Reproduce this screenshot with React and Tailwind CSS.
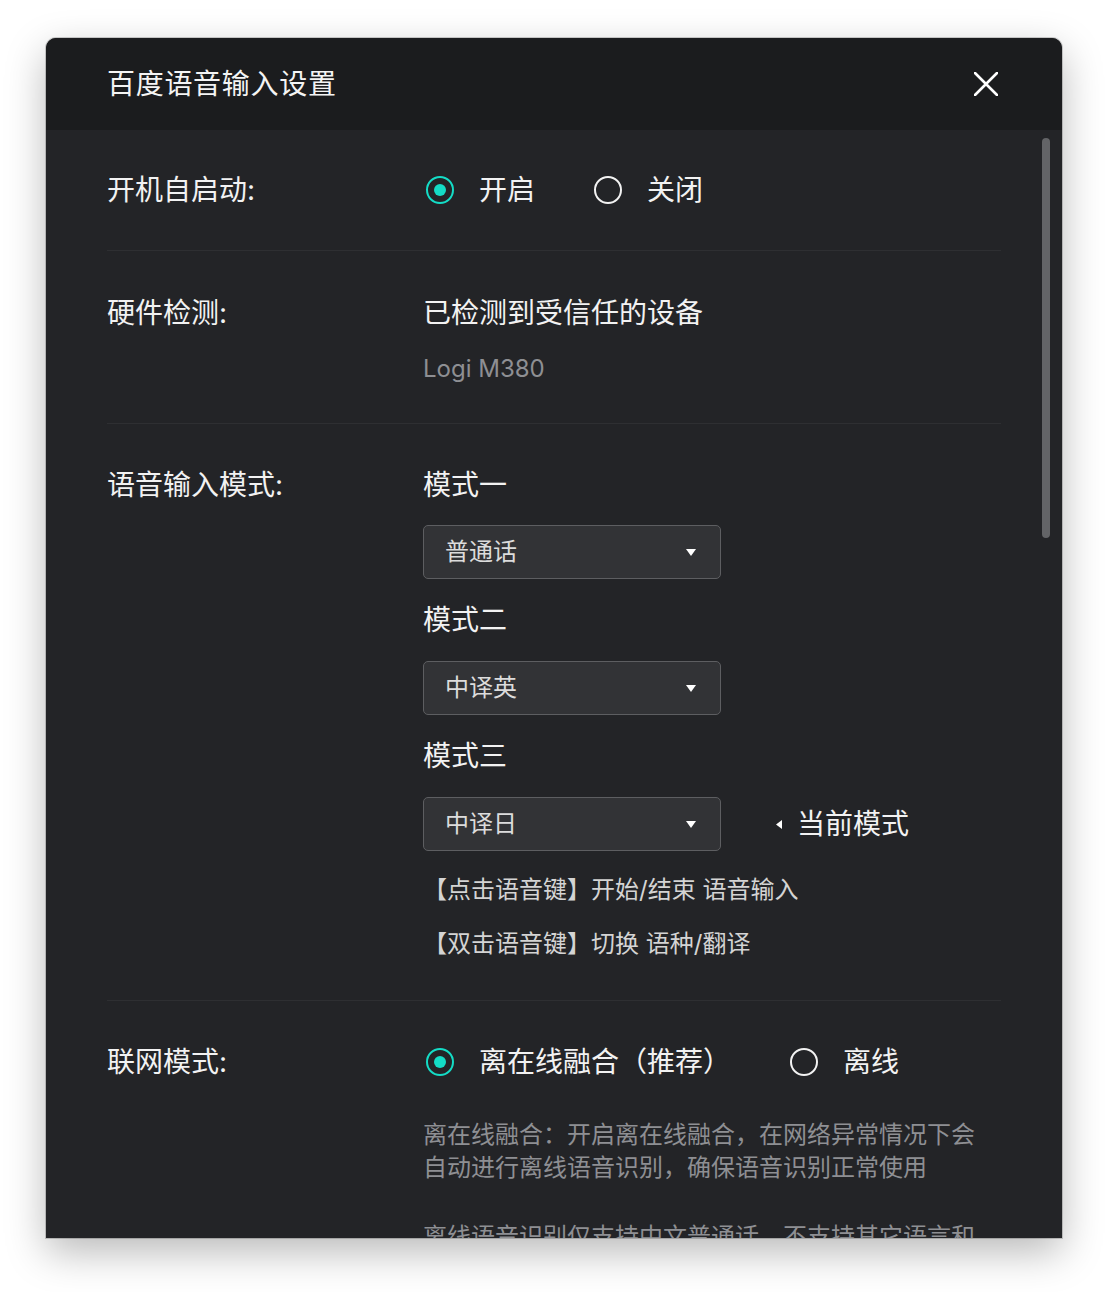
import React from "react";

const FONT = "font-['Inter','Noto_Sans_CJK_SC',sans-serif]";

function Radio({ checked, label }) {
  return (
    <div className="flex items-center gap-[25px]">
      {checked ? (
        <span className="flex h-[28px] w-[28px] items-center justify-center rounded-full border-[2.5px] border-[#14dcc6]">
          <span className="h-[12px] w-[12px] rounded-full bg-[#14dcc6]" />
        </span>
      ) : (
        <span className="h-[28px] w-[28px] rounded-full border-2 border-[#f2f2f2]" />
      )}
      <span className="text-[28px] leading-[36px] text-[#f2f2f2]">{label}</span>
    </div>
  );
}

function Select({ value }) {
  return (
    <div className="flex h-[54px] w-[298px] items-center justify-between rounded-[5px] border-[1.5px] border-[#5d5e61] bg-[#323336] pl-[21px] pr-[24px] text-[24px] text-[#dcdcdc]">
      <span>{value}</span>
      <svg width="10" height="7" viewBox="0 0 10 7">
        <path d="M0 0H10L5 7Z" fill="#ffffff" />
      </svg>
    </div>
  );
}

function Label({ children }) {
  return <div className="text-[28px] leading-[36px] text-[#f2f2f2]">{children}</div>;
}

export default function App() {
  return (
    <div className={`h-[1292px] w-[1108px] bg-white pt-[38px] pl-[46px] ${FONT}`}>
      <div className="relative flex h-[1200px] w-[1016px] flex-col overflow-hidden rounded-t-[10px] bg-[#232427] shadow-[0_0_0_1px_rgba(0,0,0,0.18),0_14px_40px_rgba(0,0,0,0.28)]">
        {/* title bar */}
        <div className="flex h-[92px] shrink-0 items-center justify-between bg-[#1b1c1e] pl-[61px] pr-[64px]">
          <div className="text-[28px] leading-[36px] tracking-[0.7px] text-[#f4f4f4]">百度语音输入设置</div>
          <svg width="24" height="24" viewBox="0 0 24 24">
            <path d="M1 1L23 23M23 1L1 23" stroke="#ffffff" strokeWidth="2.6" strokeLinecap="round" />
          </svg>
        </div>

        {/* settings body */}
        <div className="flex-1 overflow-hidden px-[61px]">
          <div className="grid grid-cols-[316px_1fr] border-b border-[#2e2f32] pt-[42px] pb-[42px]">
            <Label>开机自启动:</Label>
            <div className="flex items-center gap-[59px] pl-[3px]">
              <Radio checked label="开启" />
              <Radio label="关闭" />
            </div>
          </div>

          <div className="grid grid-cols-[316px_1fr] border-b border-[#2e2f32] pt-[44px] pb-[38px]">
            <Label>硬件检测:</Label>
            <div className="flex flex-col">
              <div className="text-[28px] leading-[36px] text-[#f2f2f2]">已检测到受信任的设备</div>
              <div className="mt-[22px] text-[24px] leading-[32px] text-[#8e8f93]">Logi M380</div>
            </div>
          </div>

          <div className="grid grid-cols-[316px_1fr] border-b border-[#2e2f32] pt-[43px] pb-[41px]">
            <Label>语音输入模式:</Label>
            <div className="flex flex-col">
              <div className="text-[28px] leading-[36px] text-[#f2f2f2]">模式一</div>
              <div className="mt-[22px]">
                <Select value="普通话" />
              </div>
              <div className="mt-[23px] text-[28px] leading-[36px] text-[#f2f2f2]">模式二</div>
              <div className="mt-[23px]">
                <Select value="中译英" />
              </div>
              <div className="mt-[23px] text-[28px] leading-[36px] text-[#f2f2f2]">模式三</div>
              <div className="mt-[23px] flex items-center">
                <Select value="中译日" />
                <svg className="ml-[55px]" width="6" height="9" viewBox="0 0 6 9">
                  <path d="M6 0V9L0 4.5Z" fill="#ffffff" />
                </svg>
                <span className="ml-[15px] text-[28px] leading-[36px] text-[#f2f2f2]">当前模式</span>
              </div>
              <div className="mt-[24px] text-[24px] leading-[30px] text-[#d4d4d4]">【点击语音键】开始/结束 语音输入</div>
              <div className="mt-[24px] text-[24px] leading-[30px] text-[#d4d4d4]">【双击语音键】切换 语种/翻译</div>
            </div>
          </div>

          <div className="grid grid-cols-[316px_1fr] pt-[43px]">
            <Label>联网模式:</Label>
            <div className="flex flex-col">
              <div className="flex items-center gap-[59px] pl-[3px]">
                <Radio checked label="离在线融合（推荐）" />
                <Radio label="离线" />
              </div>
              <div className="mt-[38px] w-[560px] text-[24px] leading-[33px] text-[#8e8f93]">
                离在线融合：开启离在线融合，在网络异常情况下会自动进行离线语音识别，确保语音识别正常使用
              </div>
              <div className="mt-[36px] w-[560px] text-[24px] leading-[33px] text-[#8e8f93]">
                离线语音识别仅支持中文普通话，不支持其它语言和翻译
              </div>
            </div>
          </div>
        </div>

        {/* overlay scrollbar */}
        <div className="absolute right-[12px] top-[100px] h-[400px] w-[8px] rounded-full bg-[#636467]" />
      </div>
    </div>
  );
}
